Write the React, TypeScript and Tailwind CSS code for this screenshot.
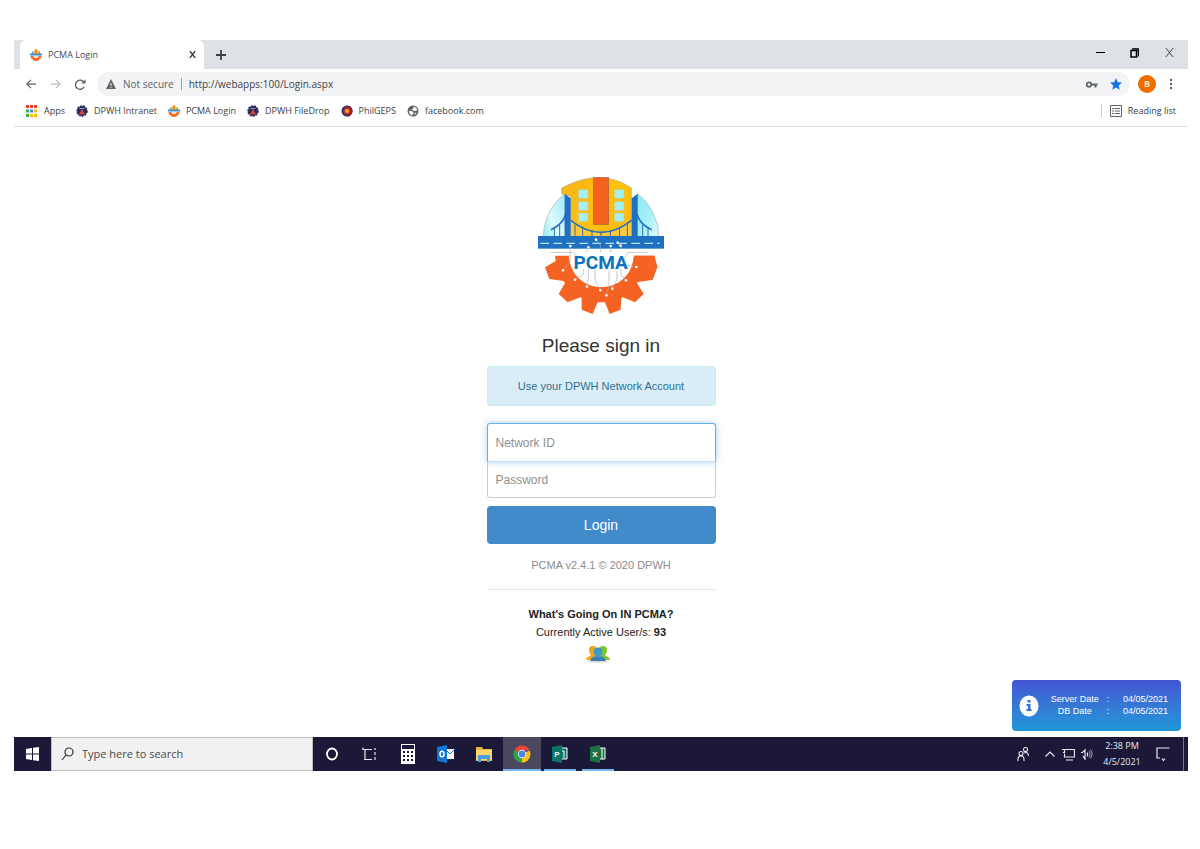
import type { ReactNode } from 'react'

interface IconProps {
  className?: string
}

function PcmaLogo({ className }: IconProps) {
  return (
    <svg viewBox="39 36 378 414" className={className} role="img" aria-label="PCMA">
      <defs>
        <linearGradient id="sky-left" x1="0" y1="1" x2="1" y2="0">
          <stop offset="0" stopColor="#8feaf2" />
          <stop offset="0.4" stopColor="#dffafc" />
          <stop offset="1" stopColor="#9cecf4" />
        </linearGradient>
        <linearGradient id="sky-right" x1="0" y1="0" x2="1" y2="1">
          <stop offset="0" stopColor="#8feaf2" />
          <stop offset="0.5" stopColor="#a5f0f6" />
          <stop offset="1" stopColor="#e4fbfd" />
        </linearGradient>
        <linearGradient id="helmet" x1="0" y1="0" x2="1" y2="1">
          <stop offset="0" stopColor="#f9b21c" />
          <stop offset="0.5" stopColor="#ffc20a" />
          <stop offset="0.85" stopColor="#fdbb12" />
          <stop offset="1" stopColor="#ffe27a" />
        </linearGradient>
      </defs>
      {/* Sky and helmet */}
      <path d="M54 216 A174 172 0 0 1 119 86 V216Z" fill="url(#sky-left)" stroke="#a9b7b9" strokeWidth="2" />
      <path d="M338 86 A174 172 0 0 1 402 216 H338Z" fill="url(#sky-right)" stroke="#a9b7b9" strokeWidth="2" />
      <path d="M110 69 Q228 6 319 69 V216 H137 V94 L110 86Z" fill="url(#helmet)" stroke="#b9a66a" strokeWidth="2" />
      <path d="M137 165 Q228 235 319 165 V216 H137Z" fill="#fdc93a" />
      <rect x="206" y="38" width="45" height="140" fill="#f56323" stroke="#b05a3a" strokeWidth="2" />
      {[74, 110, 144].map((y) => (
        <g key={y} fill="#a5f0f6" stroke="#d2c77a" strokeWidth="2">
          <rect x="160" y={y} width="29" height="26" />
          <rect x="268" y={y} width="29" height="26" />
        </g>
      ))}
      {/* Bridge */}
      <path d="M119 86 L137 100 V216 H119Z M338 86 L320 100 V216 H338Z" fill="#1f6fc4" />
      <path d="M137 166 Q228 238 320 166 M78 194 Q112 180 122 148 M380 194 Q346 180 336 148" fill="none" stroke="#1f6fc4" strokeWidth="5" />
      <path d="M88 190V216 M104 180V216 M150 178V216 M173 188V216 M201 196V216 M228 200V216 M256 196V216 M284 188V216 M307 178V216 M353 180V216 M369 190V216" stroke="#2c6fb0" strokeWidth="3" />
      <rect x="39" y="213" width="378" height="38" fill="#1f70c1" />
      <path d="M46 235H404" stroke="#b9def5" strokeWidth="4" strokeDasharray="26 13" />
      {/* Gear */}
      <path
        d="M90 272 H131 C136 332 180 366 229 366 S322 332 327 272 H388 L397 307 L340 323 V328 L384 342 L382 345 L340 350 L336 354 L356 387 L330 412 L293 397 L289 400 L287 434 L254 447 L240 412 H218 L203 447 L170 434 V400 L166 397 L128 412 L101 387 L120 354 L116 348 L73 342 L60 307 L92 288Z"
        fill="#f56323"
      />
      <path d="M327 272 H388 L397 307 L384 342 L340 350 L318 330Z" fill="#f56323" />
      {/* Circuit traces */}
      <g fill="none" stroke="#a5adb0" strokeWidth="2">
        <path d="M76 262H146L160 280 M370 262H310L298 280 M135 244V290L114 314 M176 312V328L150 344 M190 312V340L184 364 M213 224L226 240V262 M196 246L180 262 M257 242V262 M277 234L290 250 M210 314V345L226 374 M243 390L252 365V318 M262 370L276 345V318 M288 312V330L303 345 M305 300L332 306" />
      </g>
      <g fill="#f4f4f4">
        <circle cx="136" cy="243" r="4" />
        <circle cx="213" cy="224" r="4" />
        <circle cx="190" cy="247" r="4" />
        <circle cx="257" cy="243" r="4" />
        <circle cx="278" cy="233" r="4" />
        <circle cx="287" cy="242" r="4" />
        <circle cx="114" cy="316" r="4" />
        <circle cx="150" cy="344" r="4" />
        <circle cx="186" cy="365" r="4" />
        <circle cx="226" cy="376" r="4" />
        <circle cx="244" cy="391" r="4" />
        <circle cx="262" cy="371" r="4" />
        <circle cx="303" cy="346" r="4" />
        <circle cx="334" cy="306" r="4" />
      </g>
      <text x="227" y="312" textAnchor="middle" fontFamily="Roboto, sans-serif" fontWeight="700" fontSize="57" fill="#0b72bd">
        PCMA
      </text>
    </svg>
  )
}

function PcmaFavicon({ className }: IconProps) {
  return (
    <svg viewBox="0 0 24 24" className={className}>
      <path d="M4 11 Q4 4 12 1 Q20 4 20 11Z" fill="#fbc02d" />
      <path d="M10.500 0h3v9h-3z" fill="#f47a30" />
      <path d="M5 5v6 M19 5v6" stroke="#5aa0d8" strokeWidth="2" />
      <path d="M0 9h24v4H0z" fill="#3b8ed0" />
      <path d="M6 12h12v3H6z" fill="#9fcbea" />
      <path d="M1 14h5q2 4 6 4t6-4h5l-1 5-3 1-1 3-3 0-1 1h-4l-1-1-3 0-1-3-3-1Z" fill="#f46a2c" />
    </svg>
  )
}

function SealIcon({ className }: IconProps) {
  return (
    <svg viewBox="0 0 24 24" className={className}>
      <circle cx="12" cy="12" r="10" fill="#2b2c5e" stroke="#2b2c5e" strokeWidth="3" strokeDasharray="4 2" />
      <path d="M12 6 14 12 19 20 14 18 12 20 10 18 5 20 10 12Z" fill="#d8453c" />
      <path d="M7 7h10" stroke="#8d94bd" strokeWidth="2" />
    </svg>
  )
}

function PhilGepsIcon({ className }: IconProps) {
  return (
    <svg viewBox="0 0 24 24" className={className}>
      <circle cx="12" cy="12" r="11" fill="#2c2e6b" />
      <path d="M12 1a11 11 0 0 1 0 22z" fill="#8e1c24" />
      <circle cx="12" cy="12" r="7" fill="#c9291f" />
      <circle cx="12" cy="12" r="4" fill="#f6a723" />
    </svg>
  )
}

function GlobeIcon({ className }: IconProps) {
  return (
    <svg viewBox="0 0 24 24" className={className}>
      <circle cx="12" cy="12" r="11" fill="#5f6368" />
      <path d="M4 12q4-1 6 1l3 1-1 4-2 3q-6-3-6-9Z" fill="#fff" />
      <path d="M13 3q6 1 8 7l-4 2-5-1-3-2 4-2Z" fill="#fff" />
      <path d="M15 16l4-1-3 5Z" fill="#fff" />
    </svg>
  )
}

function AppsIcon({ className }: IconProps) {
  return (
    <svg viewBox="0 0 22 24" className={className}>
      <path d="M0 0h6v6H0zM8 0h6v6H8zM16 0h6v6h-6z" fill="#ea4335" />
      <path d="M0 9h6v6H0z" fill="#34a853" />
      <path d="M8 9h6v6H8z" fill="#4285f4" />
      <path d="M16 9h6v6h-6zM8 18h6v6H8zM16 18h6v6h-6z" fill="#fbbc05" />
      <path d="M0 18h6v6H0z" fill="#34a853" />
    </svg>
  )
}

const bookmarks = [
  { label: 'DPWH Intranet', icon: <SealIcon className="h-3 w-3" /> },
  { label: 'PCMA Login', icon: <PcmaFavicon className="h-3 w-3" /> },
  { label: 'DPWH FileDrop', icon: <SealIcon className="h-3 w-3" /> },
  { label: 'PhilGEPS', icon: <PhilGepsIcon className="h-3 w-3" /> },
  { label: 'facebook.com', icon: <GlobeIcon className="h-3 w-3" /> },
]

function TabBar() {
  return (
    <div className="flex h-[29px] items-stretch justify-between bg-[#dee1e6]">
      <div className="flex items-stretch pl-[6px]">
        <div className="flex w-[184px] items-center rounded-t-md bg-white pr-1 pl-[10px]">
          <PcmaFavicon className="h-3 w-3" />
          <span className="ml-[6px] flex-1 text-[9px] text-[#45494d]">PCMA Login</span>
          <button type="button" aria-label="Close tab" className="flex h-4 w-4 items-center justify-center text-[#3c4043]">
            <svg viewBox="0 0 8 8" className="h-[7px] w-[7px]" stroke="currentColor" strokeWidth="1.500">
              <path d="M1 0l6 8M7 0l-6 8" />
            </svg>
          </button>
        </div>
        <button type="button" aria-label="New tab" className="flex w-[34px] items-center justify-center text-[#3c4043]">
          <svg viewBox="0 0 10 10" className="h-[10px] w-[10px]" stroke="currentColor" strokeWidth="1.800">
            <path d="M5 0v10M0 5h10" />
          </svg>
        </button>
      </div>
      <div className="flex items-center pr-[1px] pb-1 text-black">
        <button type="button" aria-label="Minimize" className="flex h-5 w-[34px] items-center justify-center">
          <svg viewBox="0 0 9 9" className="h-[9px] w-[9px]" stroke="currentColor">
            <path d="M0 4.500h9" />
          </svg>
        </button>
        <button type="button" aria-label="Restore" className="flex h-5 w-[34px] items-center justify-center">
          <svg viewBox="0 0 9 10" className="h-[10px] w-[9px]" fill="none" stroke="currentColor">
            <path d="M1 2.500h5.500v6.500H1z" strokeWidth="1.500" />
            <path d="M2 1h6.300v7.500" strokeWidth="1.300" />
          </svg>
        </button>
        <button type="button" aria-label="Close" className="flex h-5 w-[36px] items-center justify-center">
          <svg viewBox="0 0 10 10" className="h-[9px] w-[9px]" stroke="#444" strokeWidth="1.100">
            <path d="M1 0l8 10M9 0L1 10" />
          </svg>
        </button>
      </div>
    </div>
  )
}

function AddressBar() {
  return (
    <div className="flex h-[30px] items-center pr-[15px] pl-3 text-[#5f6368]">
      <button type="button" aria-label="Back">
        <svg viewBox="0 0 24 24" className="h-[10px] w-[10px]" fill="none" stroke="currentColor" strokeWidth="3">
          <path d="M24 12H2M12 2L2 12l10 10" />
        </svg>
      </button>
      <button type="button" aria-label="Forward" className="ml-[15px] text-[#b9bbbe]">
        <svg viewBox="0 0 24 24" className="h-[10px] w-[10px]" fill="none" stroke="currentColor" strokeWidth="3">
          <path d="M0 12h22M12 2l10 10-10 10" />
        </svg>
      </button>
      <button type="button" aria-label="Reload" className="ml-[14px]">
        <svg viewBox="0 0 24 24" className="h-[11px] w-[11px]" fill="none" stroke="currentColor" strokeWidth="3">
          <path d="M20 17a10 10 0 1 1 0-9" />
          <path d="M23 1v9h-9Z" fill="currentColor" stroke="none" />
        </svg>
      </button>
      <div className="ml-[11px] flex h-6 flex-1 items-center rounded-full bg-[#f1f3f4] pr-2 pl-[9px] text-[10px]">
        <svg viewBox="0 0 10 10" className="h-[10px] w-[10px]">
          <path d="M5 0l5 10H0z" fill="#5f6368" />
          <path d="M5 4v3M5 8v1" stroke="#f1f3f4" />
        </svg>
        <span className="ml-[7px]">Not secure</span>
        <span className="mx-[7px] h-3 border-l border-[#9a9da1]" />
        <input
          aria-label="Address"
          type="text"
          defaultValue="http://webapps:100/Login.aspx"
          className="min-w-0 flex-1 bg-transparent text-[10px] text-[#3f4347] outline-none"
        />
        <svg viewBox="0 0 24 14" className="h-[7px] w-3" fill="none" stroke="#5f6368">
          <circle cx="6" cy="7" r="4.500" strokeWidth="3.500" />
          <path d="M11 7h12M19 7v6" strokeWidth="4" />
        </svg>
        <svg viewBox="0 0 24 24" className="ml-3 h-3 w-3">
          <path d="M12 0l3.500 8.300 8.500.700-6.500 5.800 2 8.700L12 19l-7.500 4.500 2-8.700L0 9l8.500-.700Z" fill="#1a73e8" />
        </svg>
      </div>
      <button
        type="button"
        aria-label="Profile"
        className="ml-2 flex h-[18px] w-[18px] items-center justify-center rounded-full bg-[#ef6c00] text-[9px] font-bold text-[#fbe3cf]"
      >
        B
      </button>
      <button type="button" aria-label="Menu" className="ml-[13px]">
        <svg viewBox="0 0 4 12" className="h-3 w-1" fill="#5f6368">
          <circle cx="2" cy="2" r="1.200" />
          <circle cx="2" cy="6" r="1.200" />
          <circle cx="2" cy="10" r="1.200" />
        </svg>
      </button>
    </div>
  )
}

function BookmarksBar() {
  return (
    <nav className="flex h-7 items-center border-b border-[#dcdee1] pr-3 pb-1 pl-3 text-[9px] text-[#3c4043]">
      <a href="#apps" className="flex items-center gap-[7px]">
        <AppsIcon className="h-3 w-[11px]" />
        Apps
      </a>
      {bookmarks.map((bookmark) => (
        <a key={bookmark.label} href="#bookmark" className="ml-[11px] flex items-center gap-[6px] whitespace-nowrap">
          {bookmark.icon}
          {bookmark.label}
        </a>
      ))}
      <button type="button" className="ml-auto flex items-center gap-[6px] border-l border-[#c6c8cb] pl-2">
        <svg viewBox="0 0 12 12" className="h-3 w-3" fill="none" stroke="#5f6368">
          <path d="M.500.500h11v11H.500z" />
          <path d="M2 3.500h2M5 3.500h5M2 6h2M5 6h5M2 8.500h2M5 8.500h5" />
        </svg>
        Reading list
      </button>
    </nav>
  )
}

function LoginForm() {
  return (
    <form className="w-[229px]">
      <h1 className="text-center text-[19px] leading-[26px] text-[#333]">Please sign in</h1>
      <div className="mt-[7px] rounded-[3px] border border-[#cdebf3] bg-[#d9edf7] py-[10px] text-center text-[11px] leading-[18px] text-[#31708f]">
        Use your DPWH Network Account
      </div>
      <input
        id="network-id"
        type="text"
        aria-label="Network ID"
        placeholder="Network ID"
        className="relative mt-[17px] block h-[39px] w-full rounded-t-[3px] border border-[#66afe9] border-b-[#c4e0f6] bg-white px-2 text-xs shadow-[0_0_6px_rgba(102,175,233,0.6)] outline-none placeholder:text-[#8f8f8f]"
      />
      <input
        id="password"
        type="password"
        aria-label="Password"
        placeholder="Password"
        className="block h-9 w-full rounded-b-[3px] border border-t-0 border-[#ccc] bg-white px-2 text-xs outline-none placeholder:text-[#8f8f8f]"
      />
      <button type="submit" className="mt-2 h-[38px] w-full rounded-[4px] bg-[#428bca] text-sm text-white">
        Login
      </button>
      <p className="mt-3 text-center text-[11px] leading-[18px] text-[#8c8c8c]">PCMA v2.4.1 © 2020 DPWH</p>
      <hr className="mt-[15px] border-[#e6e6e6]" />
    </form>
  )
}

function UsersIcon({ className }: IconProps) {
  return (
    <svg viewBox="0 0 24 18" className={className}>
      <ellipse cx="12" cy="16.500" rx="11" ry="1.200" fill="#d5d9dc" />
      <path d="M0 15q0-3 4-4l1-1q-2-2-2-5 0-4 4-4t4 4q0 3-2 5v5Z" fill="#f5a21b" />
      <path d="M24 15q0-3-4-4l-1-1q2-2 2-5 0-4-4-4t-4 4q0 3 2 5v5Z" fill="#7cc72a" />
      <path d="M4.500 16q0-4 5-5-1.800-2-1.800-4.500 0-4 4.300-4t4.300 4q0 2.500-1.800 4.500 5 1 5 5Z" fill="#3f97c6" />
      <path d="M4.500 16q0-2 2-3.500h11q2 1.500 2 3.500Z" fill="#3a80ab" />
    </svg>
  )
}

function ServerToast() {
  return (
    <div className="absolute right-[7px] bottom-[6px] flex h-[51px] w-[169px] items-center rounded-[4px] bg-linear-to-b from-[#4154d1] to-[#1d98d8] pr-[13px] pl-[7px] text-[9px] leading-3 text-white">
      <svg viewBox="0 0 20 22" className="h-[22px] w-5">
        <ellipse cx="10" cy="11" rx="9.500" ry="10.500" fill="#fff" />
        <path d="M8.500 5h3v2.500h-3zM7.500 9h4v5h1v2h-5v-2h1.500v-3h-1.500z" fill="#2f76d3" />
      </svg>
      <dl className="ml-[8px] grid flex-1 grid-cols-[1fr_auto_auto] pb-[2px]">
        <dt className="text-center">Server Date</dt>
        <dd className="pr-[14px] pl-1">:</dd>
        <dd>04/05/2021</dd>
        <dt className="text-center">DB Date</dt>
        <dd className="pr-[14px] pl-1">:</dd>
        <dd>04/05/2021</dd>
      </dl>
    </div>
  )
}

function TaskButton({ label, state, children }: { label: string; state?: 'active' | 'open'; children: ReactNode }) {
  return (
    <button
      type="button"
      aria-label={label}
      className={
        state === 'active'
          ? 'flex w-[38px] flex-col items-center bg-[#4a485e] pt-[7px]'
          : 'flex w-[38px] flex-col items-center pt-[7px]'
      }
    >
      {children}
      {state === 'active' && <span className="mt-auto h-[2px] w-full bg-[#76b9ed]" />}
      {state === 'open' && <span className="mt-auto h-[2px] w-8 bg-[#76b9ed]" />}
    </button>
  )
}

function Taskbar() {
  return (
    <footer className="flex h-[34px] items-stretch bg-[#1c1838]">
      <button type="button" aria-label="Start" className="flex w-[37px] items-center justify-center">
        <svg viewBox="0 0 13 14" className="h-[14px] w-[13px]" fill="#fff">
          <path d="M0 2l6-1v5.500H0zM7 .800L13 0v6.500H7zM0 7.500h6V13l-6-1zM7 7.500h6V14l-6-.800z" />
        </svg>
      </button>
      <div className="flex w-[262px] items-center border border-[#bdbdbd] bg-[#f1f1f1] pl-[9px]">
        <svg viewBox="0 0 13 14" className="h-[14px] w-[13px]" fill="none" stroke="#333" strokeWidth="1.200">
          <circle cx="8" cy="5" r="4" />
          <path d="M5 8L1 13" />
        </svg>
        <input
          aria-label="Search"
          type="text"
          placeholder="Type here to search"
          className="ml-2 min-w-0 flex-1 bg-transparent text-[11px] outline-none placeholder:text-[#4a4a4a]"
        />
      </div>
      <TaskButton label="Cortana">
        <svg viewBox="0 0 20 20" className="h-5 w-5">
          <ellipse cx="10" cy="10" rx="5" ry="5.500" fill="none" stroke="#fff" strokeWidth="1.800" />
        </svg>
      </TaskButton>
      <TaskButton label="Task View">
        <svg viewBox="0 0 20 20" className="h-5 w-5" fill="none" stroke="#e4e4ea" strokeWidth="1.200">
          <path d="M3 3.500v2h9M4 15.500h8M5 5.500v10M15 4v2M15 8v3M15 13v3" />
        </svg>
      </TaskButton>
      <TaskButton label="Calculator">
        <svg viewBox="0 0 14 20" className="h-5 w-[14px]">
          <path d="M0 0h14v20H0z" fill="#fff" />
          <path d="M1 1h12v4H1zM2 7h2v2H2zM6 7h2v2H6zM10 7h2v2h-2zM2 11h2v2H2zM6 11h2v2H6zM10 11h2v2h-2zM2 15h2v2H2zM6 15h2v2H6zM10 15h2v2h-2z" fill="#1c1838" />
        </svg>
      </TaskButton>
      <TaskButton label="Outlook">
        <svg viewBox="0 0 18 20" className="h-5 w-[18px]">
          <path d="M9 5h8v10H9z" fill="#fff" />
          <path d="M10 7l3 3 5-5" fill="none" stroke="#0f78d4" />
          <path d="M0 3l10-2v18L0 17z" fill="#0f78d4" />
          <ellipse cx="5" cy="10" rx="2" ry="2.800" fill="none" stroke="#fff" strokeWidth="1.500" />
        </svg>
      </TaskButton>
      <TaskButton label="File Explorer">
        <svg viewBox="0 0 18 20" className="h-5 w-[18px]">
          <path d="M1 3h6l1 2h9v12H1z" fill="#e9b53c" />
          <path d="M1 6h16v10H1z" fill="#fcd668" />
          <path d="M3 11h12v7h-3v-3H6v3H3z" fill="#4a9fe0" />
        </svg>
      </TaskButton>
      <TaskButton label="Chrome" state="active">
        <svg viewBox="0 0 20 20" className="h-5 w-[18px]">
          <path d="M10 10L1.800 5.200A9.500 9.500 0 0 1 18.500 6H10Z" fill="#e8453c" />
          <path d="M10 10L18.500 6A9.500 9.500 0 0 1 9.500 19.500Z" fill="#fbc116" />
          <path d="M10 10L9.500 19.500A9.500 9.500 0 0 1 1.800 5.200Z" fill="#2ba24c" />
          <circle cx="10" cy="10" r="4.600" fill="#fff" />
          <circle cx="10" cy="10" r="3.800" fill="#4a86e8" />
        </svg>
      </TaskButton>
      <TaskButton label="Publisher" state="open">
        <svg viewBox="0 0 18 20" className="h-5 w-[18px]">
          <path d="M9 4h7v11H9z" fill="#0b7568" stroke="#fff" />
          <path d="M9 7h4v7" fill="none" stroke="#fff" />
          <path d="M1 3l10-2v18L1 17z" fill="#0b7568" />
          <text x="6" y="13" textAnchor="middle" fontFamily="Liberation Sans, sans-serif" fontSize="8" fontWeight="700" fill="#fff">P</text>
        </svg>
      </TaskButton>
      <TaskButton label="Excel" state="open">
        <svg viewBox="0 0 18 20" className="h-5 w-[18px]">
          <path d="M9 4h7v11H9z" fill="#1e7145" stroke="#fff" />
          <path d="M13 4v11" stroke="#fff" />
          <path d="M1 3l10-2v18L1 17z" fill="#1e7145" />
          <text x="6" y="13" textAnchor="middle" fontFamily="Liberation Sans, sans-serif" fontSize="8" fontWeight="700" fill="#fff">X</text>
        </svg>
      </TaskButton>
      <div className="ml-auto flex items-center text-[#e8e8ee]">
        <svg viewBox="0 0 12 16" className="h-4 w-3" fill="none" stroke="currentColor" strokeWidth="1.100">
          <circle cx="4" cy="7.500" r="2" />
          <path d="M1 15v-2q0-3 3-3t3 3v2" />
          <circle cx="8.500" cy="3.500" r="2" />
          <path d="M7 7q4-2 4.500 3" />
        </svg>
        <svg viewBox="0 0 10 6" className="ml-4 h-[6px] w-[10px]" fill="none" stroke="currentColor" strokeWidth="1.200">
          <path d="M.500 5.500L5 1l4.500 4.500" />
        </svg>
        <svg viewBox="0 0 13 13" className="ml-[7px] h-[13px] w-[13px]" fill="none" stroke="currentColor" strokeWidth="1.200">
          <path d="M3 1.500h9.500v7.500H2.500V5.500M0 1.500h2.500v3H1M4 12h7" />
        </svg>
        <svg viewBox="0 0 12 12" className="ml-[6px] h-3 w-3" fill="none" stroke="currentColor" strokeWidth="1.200">
          <path d="M0 4.500h1.500L4 2v9L2 8M6.500 4.500v4" />
          <path d="M8 3q2 3 0 6.500M9.500 1.500q3 4.500 0 9" stroke="#8b889c" />
        </svg>
        <div className="ml-2 w-[42px] text-center text-[9px] leading-4">
          <div>2:38 PM</div>
          <div>4/5/2021</div>
        </div>
        <svg viewBox="0 0 14 16" className="ml-[13px] h-4 w-[14px]" fill="none" stroke="currentColor" strokeWidth="1.200">
          <path d="M13.500 2H1v10h3M6 12.500l1.500 2 1.500-2" />
        </svg>
        <span className="mr-1 ml-[13px] h-[34px] border-l border-[#77758a]" />
      </div>
    </footer>
  )
}

export default function App() {
  return (
    <div className="min-h-screen bg-white pt-10 pr-3 pl-[14px] font-['Open_Sans',sans-serif]">
      <header>
        <TabBar />
        <AddressBar />
        <BookmarksBar />
      </header>
      <main className="relative flex flex-col items-center pt-[50px] pb-[74px] font-['Liberation_Sans',sans-serif]">
        <PcmaLogo className="h-[138px] w-[126px]" />
        <div className="mt-[18px]">
          <LoginForm />
        </div>
        <section className="mt-[15px] flex flex-col items-center text-[11px] leading-[18px] text-[#222]">
          <h2 className="font-bold">What's Going On IN PCMA?</h2>
          <p>
            Currently Active User/s: <b>93</b>
          </p>
          <UsersIcon className="mt-1 mr-[6px] h-[18px] w-6" />
        </section>
        <ServerToast />
      </main>
      <Taskbar />
    </div>
  )
}
